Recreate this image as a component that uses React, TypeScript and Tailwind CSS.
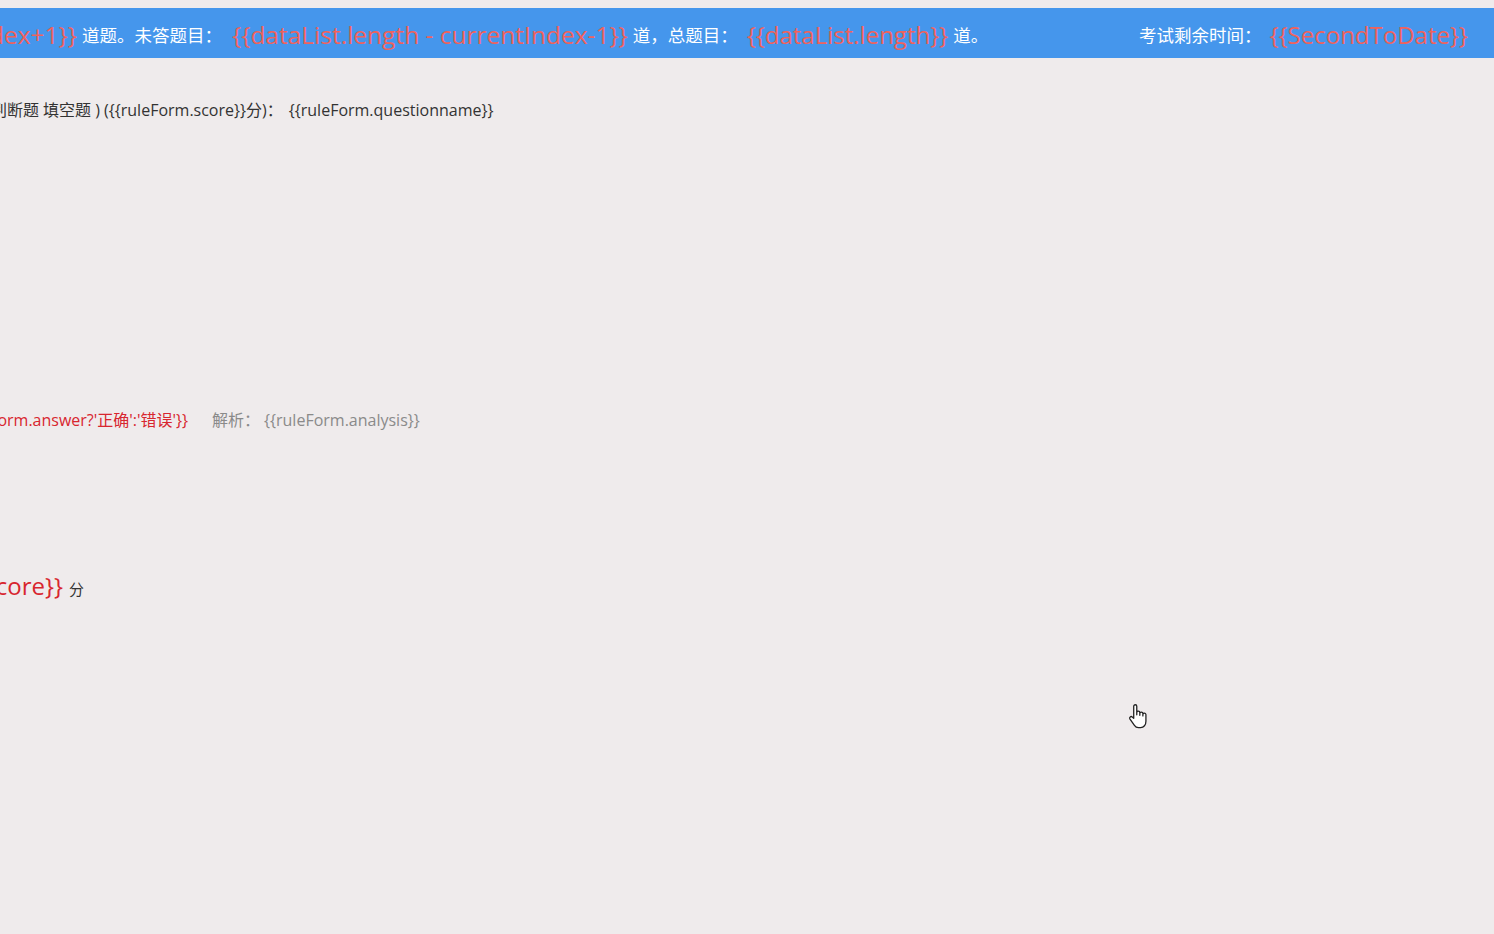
const font = { fontFamily: '"Open Sans", "Noto Sans CJK SC", sans-serif' }

function Clip({ width, children }: { width: string; children: React.ReactNode }) {
  return <span className={`inline-flex justify-end overflow-hidden whitespace-nowrap ${width}`}>{children}</span>
}

export default function App() {
  return (
    <div className="relative min-h-[934px] w-full overflow-hidden bg-[#efebec] text-[#333]" style={font}>
      <div className="h-2" />
      <header className="flex h-[50px] items-center justify-between whitespace-nowrap bg-[#4596ec] pr-[26px] pt-[4px] text-[17.5px] text-white">
        <div className="flex items-center">
          <Clip width="w-[77px]">
            <span className="text-[24.5px] text-[#f0625c]">已答题目： {'{{currentIndex+1}}'}</span>
          </Clip>
          <span className="ml-[5px]">道题。未答题目：</span>
          <span className="ml-[10px] text-[24.5px] text-[#f0625c]">{'{{dataList.length - currentIndex-1}}'}</span>
          <span className="ml-[5px]">道，总题目：</span>
          <span className="ml-[9px] text-[24px] text-[#f0625c]">{'{{dataList.length}}'}</span>
          <span className="ml-[5px]">道。</span>
        </div>
        <div className="flex items-center">
          <span>考试剩余时间：</span>
          <span className="ml-[8px] text-[24px] text-[#f0625c]">{'{{SecondToDate}}'}</span>
        </div>
      </header>

      <section className="mt-[40px] flex items-center whitespace-nowrap text-[16px] text-[#333]">
        <Clip width="w-[39px]">
          <span>1、(单选题 多选题 判断题</span>
        </Clip>
        <span className="ml-[4px]">填空题 ) ({'{{ruleForm.score}}'}分)：</span>
        <span className="ml-[6px]">{'{{ruleForm.questionname}}'}</span>
      </section>

      <section className="mt-[286px] flex items-center whitespace-nowrap text-[16px]">
        <Clip width="w-[188px]">
          <span className="text-[#d8262f]">正确答案：{"{{ruleForm.answer?'正确':'错误'}}"}</span>
        </Clip>
        <span className="ml-[24px] text-[#8a8a8a]">解析：</span>
        <span className="ml-[4px] text-[#8a8a8a]">{'{{ruleForm.analysis}}'}</span>
      </section>

      <section className="mt-[136px] flex items-baseline whitespace-nowrap">
        <Clip width="w-[63px]">
          <span className="text-[24px] text-[#d8262f]">得分：{'{{ruleForm.score}}'}</span>
        </Clip>
        <span className="ml-[6px] text-[15px] text-[#333]">分</span>
      </section>

      <svg className="absolute left-[1127px] top-[703px]" width="24" height="27" viewBox="0 0 20 23" fill="white" stroke="#222" strokeWidth="1.1" strokeLinejoin="round">
        <path d="M5.5 13V2.8a1.3 1.3 0 0 1 2.6 0V10V8.2a1.3 1.3 0 0 1 2.6 0V10.5V9a1.3 1.3 0 0 1 2.6 0v2V10a1.3 1.3 0 0 1 2.6 0v5.5c0 3-1.8 5.5-4.5 5.5H9.5c-1.5 0-2.6-.8-3.4-2L2.2 13.5a1.3 1.3 0 0 1 2-1.6Z" />
      </svg>
    </div>
  )
}
